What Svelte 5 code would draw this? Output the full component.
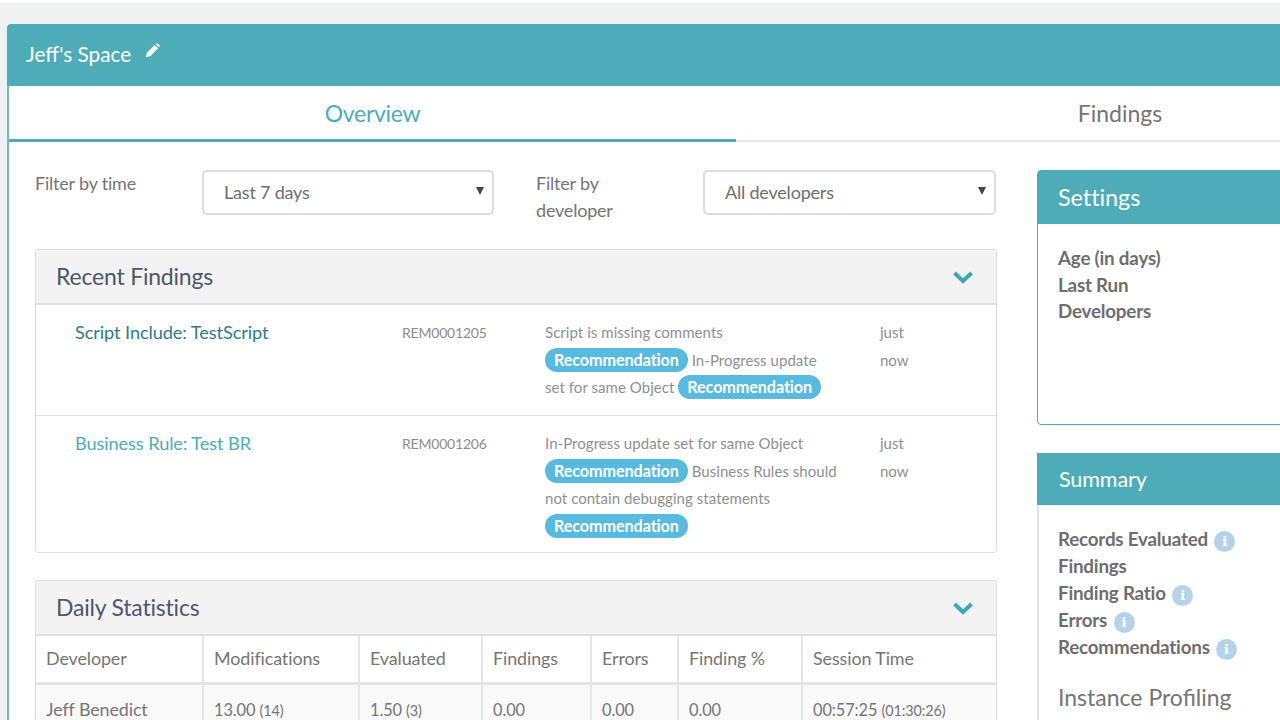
<script>
	const findings = [
		{
			title: 'Script Include: TestScript',
			dark: true,
			id: 'REM0001205',
			lines: ['Script is missing comments', 'In-Progress update set for same Object']
		},
		{
			title: 'Business Rule: Test BR',
			dark: false,
			id: 'REM0001206',
			lines: ['In-Progress update set for same Object', 'Business Rules should not contain debugging statements']
		}
	];

	const columns = ['Developer', 'Modifications', 'Evaluated', 'Findings', 'Errors', 'Finding %', 'Session Time'];
	const row = [
		['Jeff Benedict', ''],
		['13.00', '(14)'],
		['1.50', '(3)'],
		['0.00', ''],
		['0.00', ''],
		['0.00', ''],
		['00:57:25', '(01:30:26)']
	];
	const summary = [
		{ label: 'Records Evaluated', info: true },
		{ label: 'Findings', info: false },
		{ label: 'Finding Ratio', info: true },
		{ label: 'Errors', info: true },
		{ label: 'Recommendations', info: true }
	];
</script>

<div class="page">
	<div class="card">
		<header class="card-head">
			<span class="space-name">Jeff's Space</span>
			<svg class="pencil" viewBox="0 0 16 16" width="15" height="15">
				<path d="M1 15l1-4.600L10.400 2l3.600 3.600L5.600 14z" fill="#fff" />
				<path d="M11.400 1l1-.6a1 1 0 0 1 1.200.1l1.900 1.900a1 1 0 0 1 .1 1.200l-.6 1z" fill="#fff" />
			</svg>
		</header>

		<div class="card-body">
			<nav class="tabs">
				<div class="tab active">Overview</div>
				<div class="tab wide">Findings</div>
			</nav>

			<div class="content">
				<main class="left">
					<div class="filters">
						<div class="filter-label">Filter by time</div>
						<div class="select">Last 7 days</div>
						<div class="filter-label second">Filter by developer</div>
						<div class="select">All developers</div>
					</div>

					<section class="panel recent">
						<div class="panel-head">
							<h2>Recent Findings</h2>
							<svg class="chev" viewBox="0 0 22 14" width="22" height="14">
								<path d="M2.500 3l8.500 8 8.500-8" fill="none" stroke="#3fa7b3" stroke-width="4" />
							</svg>
						</div>
						{#each findings as f}
							<div class="finding">
								<a class="title" class:dark={f.dark} href="#top">{f.title}</a>
								<div class="rem">{f.id}</div>
								<div class="msg">
									{#each f.lines as l}
										{l} <span class="badge">Recommendation</span>{' '}
									{/each}
								</div>
								<div class="when">just now</div>
							</div>
						{/each}
					</section>

					<section class="panel daily">
						<div class="panel-head">
							<h2>Daily Statistics</h2>
							<svg class="chev" viewBox="0 0 22 14" width="22" height="14">
								<path d="M2.500 3l8.500 8 8.500-8" fill="none" stroke="#3fa7b3" stroke-width="4" />
							</svg>
						</div>
						<table>
							<thead>
								<tr>
									{#each columns as c}
										<th>{c}</th>
									{/each}
								</tr>
							</thead>
							<tbody>
								<tr>
									{#each row as cell}
										<td>{cell[0]} {#if cell[1]}<small>{cell[1]}</small>{/if}</td>
									{/each}
								</tr>
							</tbody>
						</table>
					</section>
				</main>

				<aside class="right">
					<section class="side settings">
						<h3 class="side-head big">Settings</h3>
						<div class="side-body">
							<div>Age (in days)</div>
							<div>Last Run</div>
							<div>Developers</div>
						</div>
					</section>
					<section class="side summary">
						<h3 class="side-head">Summary</h3>
						<div class="side-body">
							{#each summary as s}
								<div>
									{s.label}
									{#if s.info}<span class="info">i</span>{/if}
								</div>
							{/each}
							<h4>Instance Profiling</h4>
						</div>
					</section>
				</aside>
			</div>
		</div>
	</div>
</div>

<style>
	:global(body) {
		margin: 0;
		overflow: hidden;
		background: #fff;
	}

	.page {
		width: 1280px;
		height: 720px;
		overflow: hidden;
		box-sizing: border-box;
		border-top: 3px solid #fff;
		background: #f0f1f3;
		padding: 21px 0 0 7px;
		font-family: Lato, "Open Sans", sans-serif;
		color: #757575;
	}

	.card {
		width: 1500px;
		height: 800px;
		background: #fff;
		border-radius: 4px 4px 0 0;
	}

	.card-head {
		height: 62px;
		box-sizing: border-box;
		background: #4dacb8;
		border-radius: 4px 4px 0 0;
		padding: 17px 19px 0;
		display: flex;
		align-items: flex-start;
		color: #fff;
		font-size: 20.800px;
		line-height: 25px;
	}

	.pencil {
		margin: 2px 0 0 14px;
	}

	.card-body {
		border-left: 2px solid #6db9c4;
		height: 738px;
	}

	.tabs {
		display: flex;
		height: 56px;
		border-bottom: 2px solid #e8e8e8;
		box-sizing: border-box;
	}

	.tab {
		width: 727px;
		text-align: center;
		font-size: 23px;
		line-height: 54px;
		color: #757575;
	}

	.tab.wide {
		width: 768px;
	}

	.tab.active {
		color: #4dacb8;
		height: 56px;
		box-sizing: border-box;
		border-bottom: 3px solid #4dacb8;
		letter-spacing: -0.3px;
	}

	.content {
		display: flex;
		padding: 28px 0 0 26px;
		gap: 40px;
	}

	.left {
		width: 962px;
		flex: none;
	}

	.filters {
		display: grid;
		grid-template-columns: 167px 292px 209px 293px;
		height: 79px;
		align-items: start;
	}

	.filter-label {
		font-size: 18px;
		line-height: 27px;
		letter-spacing: -0.2px;
	}

	.filter-label.second {
		margin-left: 42px;
		width: 100px;
	}

	.select {
		position: relative;
		height: 45px;
		box-sizing: border-box;
		border: 2px solid #ddd;
		border-radius: 5px;
		padding: 0 20px;
		line-height: 41px;
		font-size: 18px;
		letter-spacing: -0.2px;
		color: #6e6e6e;
	}

	.select::after {
		content: "";
		position: absolute;
		right: 8px;
		top: 15px;
		border-left: 4px solid transparent;
		border-right: 4px solid transparent;
		border-top: 8px solid #444;
	}

	.panel {
		border: 1px solid #ddd;
		border-radius: 3px;
	}

	.recent {
		height: 304px;
		box-sizing: border-box;
		margin-bottom: 27px;
	}

	.panel-head {
		height: 55px;
		box-sizing: border-box;
		background: #f3f3f3;
		border-bottom: 2px solid #e0e0e0;
		display: flex;
		align-items: center;
		justify-content: space-between;
		padding: 0 22px 0 20px;
	}

	.panel-head h2 {
		margin: 0;
		padding-bottom: 2px;
		font-weight: 400;
		font-size: 23px;
		letter-spacing: -0.2px;
		color: #50566a;
	}

	.finding {
		display: grid;
		grid-template-columns: 327px 143px 335px 60px;
		padding: 14px 0 0 39px;
		box-sizing: border-box;
		height: 111px;
		border-bottom: 1px solid #e3e3e3;
		font-size: 15px;
		line-height: 27.500px;
	}

	.finding:last-child {
		border-bottom: 0;
		height: 136px;
	}

	.title {
		font-size: 18.200px;
		color: #4dacb8;
		text-decoration: none;
		line-height: 27px;
		letter-spacing: -0.1px;
	}

	.title.dark {
		color: #2f7c86;
	}

	.rem {
		font-size: 14px;
		color: #8c8c8c;
		letter-spacing: -0.2px;
	}

	.msg {
		color: #8f8f8f;
		width: 293px;
		letter-spacing: 0.05px;
	}

	.when {
		color: #8f8f8f;
		width: 40px;
	}

	.badge {
		display: inline-block;
		background: #58bade;
		color: #fff;
		font-weight: 700;
		font-size: 16.200px;
		line-height: 24px;
		padding: 0 9px;
		border-radius: 12px;
		letter-spacing: -0.1px;
		vertical-align: baseline;
	}

	.daily {
		border-bottom: 0;
	}

	table {
		width: 100%;
		border-collapse: collapse;
		table-layout: fixed;
		font-size: 17.900px;
		letter-spacing: -0.1px;
	}

	th {
		font-weight: 400;
		text-align: left;
		height: 47px;
		padding: 0 10px 2px;
		border-right: 2px solid #e6e6e6;
		border-bottom: 3px solid #e3e3e3;
		box-sizing: border-box;
	}

	th:nth-child(1) { width: 167px; }
	th:nth-child(2) { width: 156px; }
	th:nth-child(3) { width: 123px; }
	th:nth-child(4) { width: 109px; }
	th:nth-child(5) { width: 87px; }
	th:nth-child(6) { width: 124px; }

	th:last-child,
	td:last-child {
		border-right: 0;
	}

	td {
		background: #f9f9f9;
		height: 48px;
		padding: 0 10px 2px;
		border-right: 2px solid #e6e6e6;
		white-space: nowrap;
		font-size: 16.400px;
	}

	td:first-child {
		font-size: 17.900px;
		padding-bottom: 4px;
	}

	td small {
		font-size: 14.400px;
	}

	.right {
		width: 300px;
		flex: none;
	}

	.side {
		box-sizing: border-box;
		border-radius: 4px 4px 0 0;
	}

	.settings {
		height: 255px;
		border: 1px solid #4dacb8;
		border-radius: 4px;
		margin-bottom: 28px;
	}

	.summary {
		border-left: 2px solid #e4e4e4;
	}

	.side-head {
		margin: 0;
		background: #4dacb8;
		color: #fff;
		font-weight: 400;
		font-size: 21.500px;
		height: 52px;
		line-height: 52px;
		padding-left: 22px;
		margin-left: -2px;
		letter-spacing: -0.1px;
	}

	.side-head.big {
		font-size: 23.500px;
		height: 53px;
		line-height: 52px;
		margin-left: 0;
		padding-left: 20px;
	}

	.side-body {
		padding: 21px 0 0 20px;
		font-weight: 700;
		font-size: 18.800px;
		line-height: 26.700px;
		letter-spacing: -0.2px;
		color: #6e6e6e;
	}

	.summary .side-body {
		padding: 20px 0 40px 19px;
		line-height: 27px;
	}

	.info {
		display: inline-block;
		width: 21px;
		height: 21px;
		border-radius: 50%;
		background: #b5d3e8;
		color: #fff;
		font-family: "DejaVu Serif", serif;
		font-size: 13px;
		line-height: 21px;
		text-align: center;
		margin-left: 2px;
		vertical-align: 0;
		letter-spacing: 0;
	}

	h4 {
		margin: 24px 0 0;
		font-weight: 400;
		font-size: 23px;
		line-height: 27px;
		letter-spacing: 0;
		color: #757575;
	}
</style>
